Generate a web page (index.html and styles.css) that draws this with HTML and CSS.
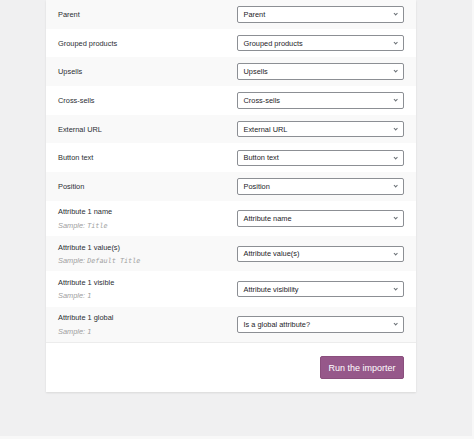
FILE: index.html
```html
<!DOCTYPE html>
<html>
<head>
<meta charset="utf-8">
<link rel="stylesheet" href="styles.css">
</head>
<body>
<div class="page">
  <div class="card">
    <div class="table">
      <div class="row odd"><div class="label"><span class="name">Parent</span></div><div class="select">Parent</div></div>
      <div class="row"><div class="label"><span class="name">Grouped products</span></div><div class="select">Grouped products</div></div>
      <div class="row odd"><div class="label"><span class="name">Upsells</span></div><div class="select">Upsells</div></div>
      <div class="row"><div class="label"><span class="name">Cross-sells</span></div><div class="select">Cross-sells</div></div>
      <div class="row odd"><div class="label"><span class="name">External URL</span></div><div class="select">External URL</div></div>
      <div class="row"><div class="label"><span class="name">Button text</span></div><div class="select">Button text</div></div>
      <div class="row odd"><div class="label"><span class="name">Position</span></div><div class="select">Position</div></div>
      <div class="row tall"><div class="label"><span class="name">Attribute 1 name</span><span class="sample">Sample: <code>Title</code></span></div><div class="select">Attribute name</div></div>
      <div class="row tall odd"><div class="label"><span class="name">Attribute 1 value(s)</span><span class="sample">Sample: <code>Default Title</code></span></div><div class="select">Attribute value(s)</div></div>
      <div class="row tall"><div class="label"><span class="name">Attribute 1 visible</span><span class="sample">Sample: <code>1</code></span></div><div class="select">Attribute visibility</div></div>
      <div class="row tall odd last"><div class="label"><span class="name">Attribute 1 global</span><span class="sample">Sample: <code>1</code></span></div><div class="select">Is a global attribute?</div></div>
    </div>
    <div class="actions">
      <button class="btn">Run the importer</button>
    </div>
  </div>
</div>
</body>
</html>
```
FILE: styles.css
```css
html, body {
  margin: 0;
  padding: 0;
  background: #f8f8f8;
}
body {
  width: 474px;
  height: 439px;
  overflow: hidden;
  font-family: "Liberation Sans", Arial, sans-serif;
}
.page {
  width: 472px;
  height: 436px;
  background: #f0f0f1;
  padding-left: 46px;
  box-sizing: border-box;
}
.card {
  width: 370px;
  background: #fff;
  box-shadow: 0 1px 2px rgba(0,0,0,0.10);
}
.row {
  display: flex;
  align-items: center;
  justify-content: space-between;
  height: 28.7px;
  padding: 0 12px;
  background: #fff;
}
.row.odd {
  background: #f9f9f9;
}
.row.tall {
  height: 35.3px;
}
.row.last {
  border-bottom: 1px solid #ececec;
}
.label {
  display: flex;
  flex-direction: column;
  gap: 4.5px;
  color: #2a2e33;
  font-size: 7.4px;
}
.sample {
  color: #a0a0a0;
  font-style: italic;
}
.sample code {
  font-family: "DejaVu Sans Mono", monospace;
  font-style: italic;
  font-size: 6.8px;
  color: #a0a0a0;
}
.select {
  width: 167px;
  height: 16.5px;
  box-sizing: border-box;
  border: 1px solid #8c8f94;
  border-radius: 2px;
  background: #fff;
  color: #1d2327;
  font-size: 7.4px;
  display: flex;
  align-items: center;
  padding-left: 5.5px;
  position: relative;
}
.select::after {
  content: "";
  position: absolute;
  right: 5.5px;
  top: 5px;
  width: 2.4px;
  height: 2.4px;
  border-right: 1px solid #6b7177;
  border-bottom: 1px solid #6b7177;
  transform: rotate(45deg);
}
.actions {
  display: flex;
  justify-content: flex-end;
  padding: 13px 12px 13px;
}
.btn {
  background: #96588a;
  color: #fff;
  border: 1px solid #8a4f7d;
  border-radius: 2px;
  width: 84px;
  height: 23px;
  font-family: "Liberation Sans", Arial, sans-serif;
  font-size: 9px;
  padding: 0;
}
```
